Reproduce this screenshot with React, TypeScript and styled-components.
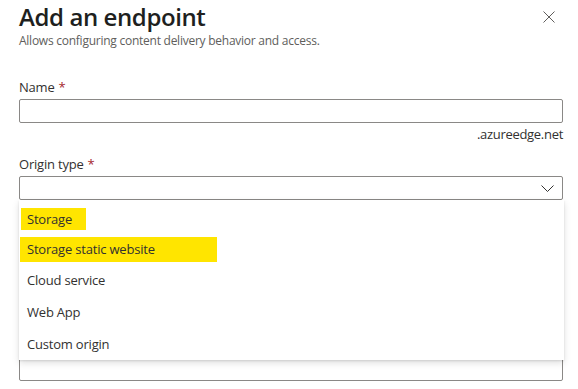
import React from "react";
import styled, { createGlobalStyle } from "styled-components";

const Global = createGlobalStyle`
  html, body { margin: 0; padding: 0; background: #ffffff; }
  body { font-family: "Open Sans", "Noto Sans", sans-serif; color: #323130; }
  * { box-sizing: border-box; }
`;

const Panel = styled.div`
  width: 578px;
  height: 389px;
  overflow: hidden;
  padding: 0 15px 0 19px;
  display: flex;
  flex-direction: column;
`;

const Header = styled.header`
  display: flex;
  justify-content: space-between;
  align-items: flex-start;
`;

const TitleBlock = styled.div`
  display: flex;
  flex-direction: column;
`;

const Title = styled.h1`
  margin: 1px 0 0 0;
  font-size: 24px;
  line-height: 32px;
  font-weight: 600;
  color: #201f1e;
  letter-spacing: -0.4px;
`;

const Subtitle = styled.p`
  margin: 0;
  font-size: 12px;
  line-height: 16px;
  color: #605e5c;
  letter-spacing: -0.25px;
`;

const CloseButton = styled.button`
  margin: 11px 8px 0 0;
  padding: 0;
  width: 12px;
  height: 12px;
  border: none;
  background: transparent;
  display: flex;
  cursor: pointer;
`;

const Form = styled.div`
  display: flex;
  flex-direction: column;
  margin-top: 29px;
  width: 544px;
`;

const Field = styled.div<{ $gap?: number }>`
  position: relative;
  display: flex;
  flex-direction: column;
  margin-top: ${(p) => p.$gap ?? 0}px;
`;

const Label = styled.label`
  font-size: 13px;
  line-height: 18px;
  color: #323130;
  margin-bottom: 3px;
  letter-spacing: -0.2px;
`;

const Required = styled.span`
  color: #a4262c;
  margin-left: 4px;
`;

const Input = styled.div`
  height: 24px;
  border: 1px solid #8a8886;
  border-radius: 2px;
  background: #fff;
  display: flex;
  align-items: center;
  justify-content: flex-end;
  padding-right: 8px;
`;

const Suffix = styled.div`
  align-self: flex-end;
  font-size: 13px;
  line-height: 18px;
  margin-top: 2px;
  color: #323130;
  letter-spacing: -0.3px;
`;

const Menu = styled.ul`
  position: absolute;
  top: 100%;
  left: 0;
  right: -1px;
  margin: 0;
  padding: 0;
  list-style: none;
  background: #fff;
  box-shadow: 0 3.2px 7.2px rgba(0, 0, 0, 0.13), 0 0.6px 1.8px rgba(0, 0, 0, 0.11);
  z-index: 2;
`;

const Option = styled.li`
  height: 32px;
  display: flex;
  align-items: center;
  font-size: 13px;
  color: #323130;
  letter-spacing: -0.2px;
`;

const Mark = styled.span<{ $padL: number; $padR: number; $h: number; $dy: number }>`
  background: #ffe500;
  display: inline-flex;
  align-items: center;
  height: ${(p) => p.$h}px;
  padding: 0 ${(p) => p.$padR}px 0 ${(p) => p.$padL}px;
  margin-left: ${(p) => 8 - p.$padL}px;
  transform: translateY(${(p) => p.$dy}px);
`;

const Plain = styled.span`
  margin-left: 8px;
`;

const options: { label: string; mark?: { l: number; r: number; h: number; dy: number } }[] = [
  { label: "Storage", mark: { l: 6, r: 14, h: 22, dy: 3 } },
  { label: "Storage static website", mark: { l: 7, r: 62, h: 25, dy: 1 } },
  { label: "Cloud service" },
  { label: "Web App" },
  { label: "Custom origin" },
];

export default function App() {
  return (
    <>
      <Global />
      <Panel>
        <Header>
          <TitleBlock>
            <Title>Add an endpoint</Title>
            <Subtitle>Allows configuring content delivery behavior and access.</Subtitle>
          </TitleBlock>
          <CloseButton aria-label="Close">
            <svg width="12" height="12" viewBox="0 0 12 12">
              <path d="M0.5 0.5 L11.5 11.5 M11.5 0.5 L0.5 11.5" stroke="#605e5c" strokeWidth="1" fill="none" />
            </svg>
          </CloseButton>
        </Header>
        <Form>
          <Field>
            <Label>
              Name<Required>*</Required>
            </Label>
            <Input />
            <Suffix>.azureedge.net</Suffix>
          </Field>
          <Field $gap={12}>
            <Label>
              Origin type<Required>*</Required>
            </Label>
            <Input>
              <svg width="13" height="7" viewBox="0 0 13 7">
                <path d="M0.5 0.5 L6.5 6.5 L12.5 0.5" stroke="#323130" strokeWidth="1" fill="none" />
              </svg>
            </Input>
            <Menu>
              {options.map((o) => (
                <Option key={o.label}>
                  {o.mark ? (
                    <Mark $padL={o.mark.l} $padR={o.mark.r} $h={o.mark.h} $dy={o.mark.dy}>
                      {o.label}
                    </Mark>
                  ) : (
                    <Plain>{o.label}</Plain>
                  )}
                </Option>
              ))}
            </Menu>
          </Field>
          <Field $gap={157}>
            <Input />
          </Field>
        </Form>
      </Panel>
    </>
  );
}
